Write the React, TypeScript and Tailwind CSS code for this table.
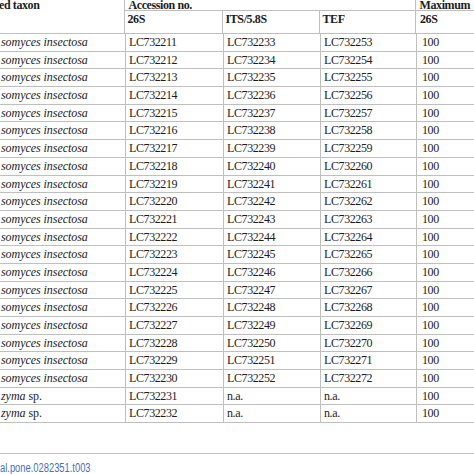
import React from "react";

const rows = Array.from({ length: 22 }, (_, i) => {
  const n = i + 1;
  const c2 = `LC7322${11 + i}`;
  const c3 = n <= 20 ? `LC7322${33 + i}` : "n.a.";
  const c4 = n <= 20 ? `LC7322${53 + i}` : "n.a.";
  return { n, c2, c3, c4 };
});

export default function App() {
  return (
    <div className="w-[474px] h-[474px] overflow-hidden bg-white text-[#1c1c1c] font-['Liberation_Serif',serif] text-[12px] tracking-[-0.4px]">
      {/* header */}
      <div className="flex h-[34px] border-b border-[#bfbfbf]">
        <div className="w-[125.5px] shrink-0 border-r border-[#bfbfbf] font-bold leading-[10.5px] -ml-[1px]">
          ed taxon
        </div>
        <div className="flex flex-col flex-1">
          <div className="flex h-[11.3px] border-b border-[#bfbfbf] font-bold leading-[10.5px]">
            <div className="w-[291px] shrink-0 border-r border-[#bfbfbf] pl-[4px]">Accession no.</div>
            <div className="flex-1 pl-[4px]">Maximum</div>
          </div>
          <div className="flex flex-1 font-bold leading-[17px]">
            <div className="w-[98px] shrink-0 border-r border-[#bfbfbf] pl-[3px]">26S</div>
            <div className="w-[97px] shrink-0 border-r border-[#bfbfbf] pl-[3px]">ITS/5.8S</div>
            <div className="w-[96.5px] shrink-0 border-r border-[#bfbfbf] pl-[3px]">TEF</div>
            <div className="flex-1 pl-[4px]">26S</div>
          </div>
        </div>
      </div>
      {/* body */}
      {rows.map((r) => (
        <div key={r.n} className="flex h-[17.7px] border-b border-[#bfbfbf] leading-[16px]">
          <div className="w-[125.5px] shrink-0 border-r border-[#bfbfbf] pl-[1px] whitespace-nowrap tracking-[-0.05px]">
            {r.n <= 20 ? (
              <i>somyces insectosa</i>
            ) : (
              <>
                <i>zyma</i> sp.
              </>
            )}
          </div>
          <div className="w-[98px] shrink-0 border-r border-[#bfbfbf] pl-[3.5px]">{r.c2}</div>
          <div className="w-[97px] shrink-0 border-r border-[#bfbfbf] pl-[3.5px]">{r.c3}</div>
          <div className="w-[96.5px] shrink-0 border-r border-[#bfbfbf] pl-[3.5px]">{r.c4}</div>
          <div className="flex-1 pl-[5px]">100</div>
        </div>
      ))}
      {/* footer */}
      <div className="mt-[29.6px] border-t border-[#bfbfbf]"></div>
      <div className="mt-[6.8px] leading-[14px] text-[12px] tracking-normal font-['Liberation_Sans',sans-serif] text-[#3f6fc6] whitespace-nowrap">
        <span className="inline-block origin-left scale-x-[0.78]">al.pone.0282351.t003</span>
      </div>
    </div>
  );
}
